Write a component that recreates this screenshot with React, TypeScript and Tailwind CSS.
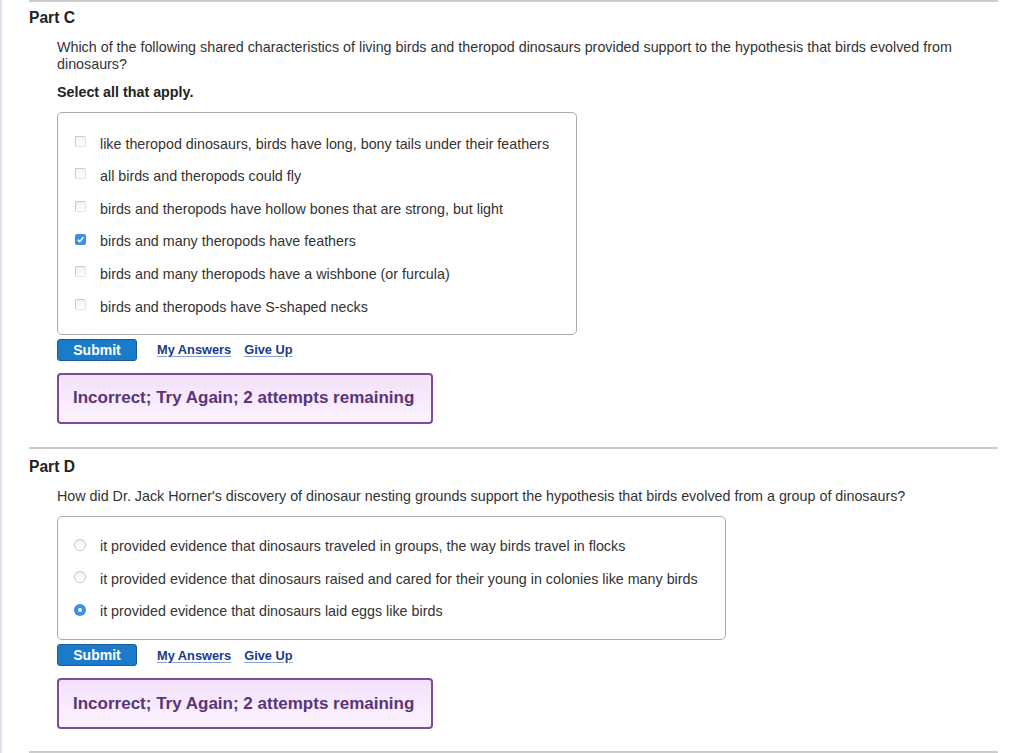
import React from 'react';

const partC = [
  { label: 'like theropod dinosaurs, birds have long, bony tails under their feathers', checked: false },
  { label: 'all birds and theropods could fly', checked: false },
  { label: 'birds and theropods have hollow bones that are strong, but light', checked: false },
  { label: 'birds and many theropods have feathers', checked: true },
  { label: 'birds and many theropods have a wishbone (or furcula)', checked: false },
  { label: 'birds and theropods have S-shaped necks', checked: false },
];

const partD = [
  { label: 'it provided evidence that dinosaurs traveled in groups, the way birds travel in flocks', checked: false },
  { label: 'it provided evidence that dinosaurs raised and cared for their young in colonies like many birds', checked: false },
  { label: 'it provided evidence that dinosaurs laid eggs like birds', checked: true },
];

function Checkbox({ checked }: { checked: boolean }) {
  if (checked) {
    return (
      <span className="flex h-[11px] w-[11px] items-center justify-center rounded-[2px] bg-[#3d8ee8]">
        <svg width="9" height="9" viewBox="0 0 10 10">
          <path d="M2 5.2 L4.2 7.3 L8.2 2.6" fill="none" stroke="#fff" strokeWidth="1.7" />
        </svg>
      </span>
    );
  }
  return <span className="block h-[11px] w-[11px] rounded-[2px] border border-[#c8c8c8] border-b-[#e4e4e4] border-r-[#e4e4e4] bg-gradient-to-b from-[#f2f2f2] to-white" />;
}

function Radio({ checked }: { checked: boolean }) {
  if (checked) {
    return (
      <span className="flex h-[12px] w-[12px] items-center justify-center rounded-full bg-[#3d8ee8]">
        <span className="block h-[4px] w-[4px] rounded-full bg-white" />
      </span>
    );
  }
  return <span className="block h-[12px] w-[12px] rounded-full border border-[#c8c8c8] bg-gradient-to-b from-[#f2f2f2] to-white" />;
}

function Actions() {
  return (
    <>
      <div className="mt-[4px] flex h-[22px] items-center">
        <button className="h-[22px] w-[80px] rounded-[3px] border border-[#1b5d92] bg-[#1b7bcb] text-[14px] font-bold leading-none text-white">
          Submit
        </button>
        <a href="#" className="ml-[20px] text-[12.8px] font-bold text-[#1a3b8c] underline decoration-[#8aa3d6] underline-offset-2">
          My Answers
        </a>
        <a href="#" className="ml-[13px] text-[12.8px] font-bold text-[#1a3b8c] underline decoration-[#8aa3d6] underline-offset-2">
          Give Up
        </a>
      </div>
      <div className="mt-[12px] flex h-[51px] w-[376px] items-center rounded-[4px] border-2 border-[#7b4b9c] bg-gradient-to-b from-[#f3e1fb] to-[#fcf3ff] pl-[14px]">
        <span className="text-[17px] font-bold text-[#5a3479]">Incorrect; Try Again; 2 attempts remaining</span>
      </div>
    </>
  );
}

export default function App() {
  return (
    <div
      className="min-h-[753px] border-l-2 border-[#dbe3ee] bg-white text-[#333]"
      style={{ fontFamily: '"Liberation Sans", Arial, sans-serif' }}
    >
      <div className="ml-[27px] w-[969px]">
        <div className="border-t-2 border-[#cccccc] pt-[7px]">
          <h2 className="text-[15.6px] font-bold leading-[18px] text-[#222]">Part C</h2>
          <div className="pl-[28px]">
            <p className="mt-[12px] w-[920px] text-[14.3px] leading-[17px]">
              Which of the following shared characteristics of living birds and theropod dinosaurs provided support to the hypothesis that birds evolved from dinosaurs?
            </p>
            <p className="mt-[11px] text-[14.3px] font-bold leading-[17px] text-[#222]">Select all that apply.</p>
            <div className="mt-[11px] w-[520px] rounded-[5px] border border-[#ababab] pb-[10px] pt-[15px]">
              {partC.map((o) => (
                <div key={o.label} className="flex h-[32.6px] items-center">
                  <span className="ml-[17px] -mt-[6px] w-[25px]">
                    <Checkbox checked={o.checked} />
                  </span>
                  <span className="text-[14.3px]">{o.label}</span>
                </div>
              ))}
            </div>
            <Actions />
          </div>
        </div>

        <div className="mt-[23px] border-t-2 border-[#cccccc] pt-[9px]">
          <h2 className="text-[15.6px] font-bold leading-[18px] text-[#222]">Part D</h2>
          <div className="pl-[28px]">
            <p className="mt-[12px] text-[14.3px] leading-[17px]">
              How did Dr. Jack Horner's discovery of dinosaur nesting grounds support the hypothesis that birds evolved from a group of dinosaurs?
            </p>
            <div className="mt-[11px] w-[669px] rounded-[5px] border border-[#ababab] pb-[11px] pt-[14px]">
              {partD.map((o) => (
                <div key={o.label} className="flex h-[32.6px] items-center">
                  <span className="ml-[16px] -mt-[4px] w-[26px]">
                    <Radio checked={o.checked} />
                  </span>
                  <span className="text-[14.3px]">{o.label}</span>
                </div>
              ))}
            </div>
            <Actions />
          </div>
        </div>

        <div className="mt-[22px] border-t-2 border-[#cccccc]" />
      </div>
    </div>
  );
}
